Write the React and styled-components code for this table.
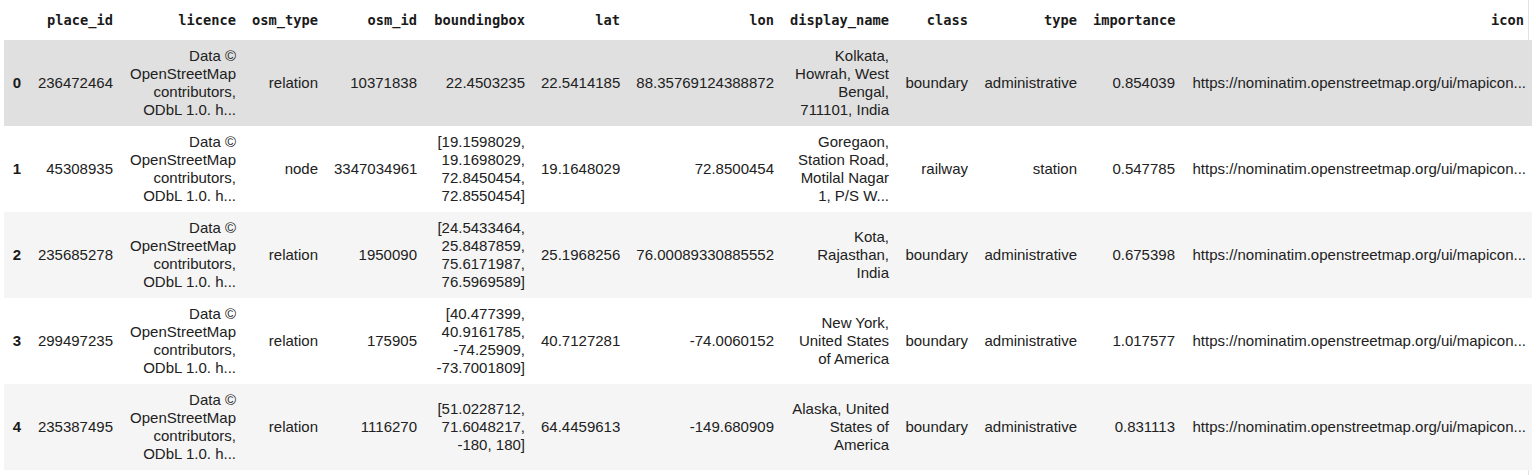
import styled, { createGlobalStyle } from "styled-components"

const GlobalStyle = createGlobalStyle`
  body {
    margin: 0;
    background: #ffffff;
    font-family: "Liberation Sans", Arial, sans-serif;
  }
`;

const Frame = styled.div`
  width: 1529px;
  padding-left: 4px;
  border-right: 1px solid #e3e3e3;
  min-height: 475px;
  box-sizing: border-box;
`;

const Table = styled.table`
  border-collapse: collapse;
  table-layout: fixed;
  width: 1528px;
  color: #212121;
  font-size: 15px;
  line-height: 18px;
`;

const HeadCell = styled.th`
  height: 40px;
  padding: 0 8px;
  text-align: right;
  vertical-align: middle;
  font-family: "DejaVu Sans Mono", "Liberation Mono", monospace;
  font-size: 13.7px;
  font-weight: bold;
  color: #1a1a1a;
  white-space: nowrap;
`;

const Row = styled.tr`
  background: ${p => p.$tone};
  height: 86px;
`;

const IndexCell = styled.th`
  padding: 0 8px 0 0;
  text-align: right;
  vertical-align: middle;
  font-weight: bold;
  color: #1a1a1a;
`;

const Cell = styled.td`
  padding: 0 ${p => (p.$last ? "6px" : "8px")} 0 8px;
  text-align: right;
  vertical-align: middle;
  white-space: pre-line;
`;

const columns = [
  { key: "", width: 25 },
  { key: "place_id", width: 92 },
  { key: "licence", width: 123 },
  { key: "osm_type", width: 82 },
  { key: "osm_id", width: 99 },
  { key: "boundingbox", width: 108 },
  { key: "lat", width: 95 },
  { key: "lon", width: 154 },
  { key: "display_name", width: 115 },
  { key: "class", width: 79 },
  { key: "type", width: 109 },
  { key: "importance", width: 98 },
  { key: "icon", width: 349 },
];

const licence = "Data ©\nOpenStreetMap\ncontributors,\nODbL 1.0. h...";
const icon = "https://nominatim.openstreetmap.org/ui/mapicon...";

const rows = [
  ["236472464", licence, "relation", "10371838", "22.4503235", "22.5414185", "88.35769124388872",
    "Kolkata,\nHowrah, West\nBengal,\n711101, India", "boundary", "administrative", "0.854039", icon],
  ["45308935", licence, "node", "3347034961", "[19.1598029,\n19.1698029,\n72.8450454,\n72.8550454]",
    "19.1648029", "72.8500454", "Goregaon,\nStation Road,\nMotilal Nagar\n1, P/S W...", "railway", "station", "0.547785", icon],
  ["235685278", licence, "relation", "1950090", "[24.5433464,\n25.8487859,\n75.6171987,\n76.5969589]",
    "25.1968256", "76.00089330885552", "Kota,\nRajasthan,\nIndia", "boundary", "administrative", "0.675398", icon],
  ["299497235", licence, "relation", "175905", "[40.477399,\n40.9161785,\n-74.25909,\n-73.7001809]",
    "40.7127281", "-74.0060152", "New York,\nUnited States\nof America", "boundary", "administrative", "1.017577", icon],
  ["235387495", licence, "relation", "1116270", "[51.0228712,\n71.6048217,\n-180, 180]",
    "64.4459613", "-149.680909", "Alaska, United\nStates of\nAmerica", "boundary", "administrative", "0.831113", icon],
];

const tones = ["#e0e0e0", "#ffffff", "#f5f5f5", "#ffffff", "#f5f5f5"];

const App = () => {
  return (
    <Frame>
      <GlobalStyle />
      <Table>
        <colgroup>
          {columns.map((c, i) => <col key={i} style={{ width: c.width }} />)}
        </colgroup>
        <thead>
          <tr>
            {columns.map((c, i) => <HeadCell key={i}>{c.key}</HeadCell>)}
          </tr>
        </thead>
        <tbody>
          {rows.map((r, i) => (
            <Row key={i} $tone={tones[i]}>
              <IndexCell>{i}</IndexCell>
              {r.map((v, j) => <Cell key={j} $last={j === r.length - 1}>{v}</Cell>)}
            </Row>
          ))}
        </tbody>
      </Table>
    </Frame>
  )
}

export default App
